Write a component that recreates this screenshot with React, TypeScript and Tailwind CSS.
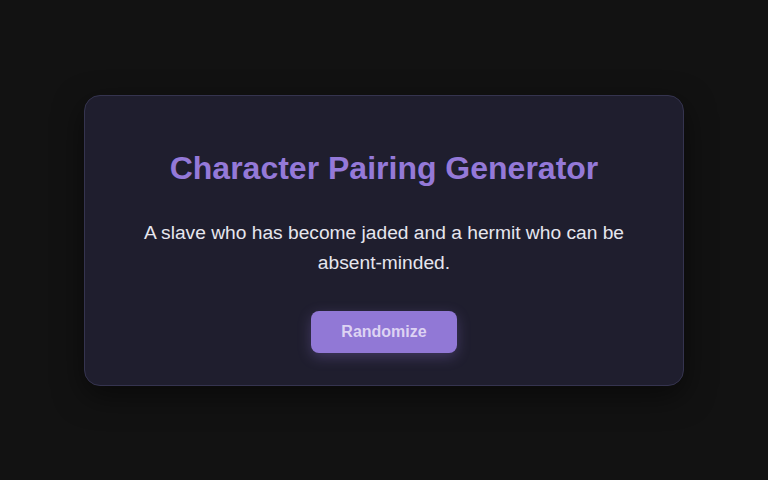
import React, { useState } from 'react';

const roles = [
  'A slave who has become jaded',
  'a hermit who can be absent-minded',
];

export default function App() {
  const [pair] = useState(roles);
  const sentence = `${pair[0]} and ${pair[1]}.`;

  return (
    <div className="min-h-screen w-full bg-[#121212] flex items-center justify-center font-['Liberation_Sans',Arial,sans-serif]">
      <div className="w-[600px] h-[291px] rounded-2xl border border-[#35344f] bg-[#1f1e2e] shadow-[0_10px_30px_rgba(0,0,0,0.5)] px-8 pt-[53px] pb-8 flex flex-col items-center text-center">
        {/* Title */}
        <h1 className="text-[32px] leading-[38px] font-bold text-[#9479d8]">Character Pairing Generator</h1>

        {/* Generated pairing */}
        <p className="mt-[31px] text-[19.2px] leading-[30px] text-[#e6e6ee] max-w-[500px]">{sentence}</p>

        <button className="mt-[33px] h-[42px] w-[146px] rounded-lg bg-[#9178d6] text-[#ddd3f3] text-base font-bold shadow-[0_4px_14px_rgba(145,120,214,0.3)]">
          Randomize
        </button>
      </div>
    </div>
  );
}
